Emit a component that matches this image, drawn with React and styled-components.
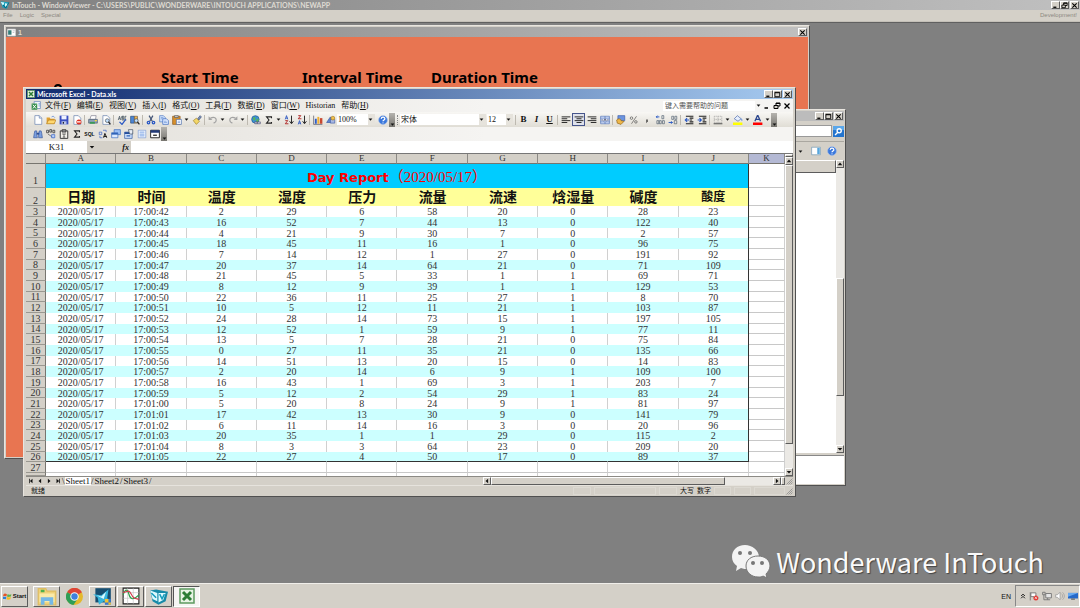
import styled, { createGlobalStyle, css } from 'styled-components'

const columns = ['A', 'B', 'C', 'D', 'E', 'F', 'G', 'H', 'I', 'J']
const titles = ['日期', '时间', '温度', '湿度', '压力', '流量', '流速', '焓湿量', '碱度', '酸度']
const readings = [
  ['17:00:42', 2, 29, 6, 58, 20, 0, 28, 23],
  ['17:00:43', 16, 52, 7, 44, 13, 0, 122, 40],
  ['17:00:44', 4, 21, 9, 30, 7, 0, 2, 57],
  ['17:00:45', 18, 45, 11, 16, 1, 0, 96, 75],
  ['17:00:46', 7, 14, 12, 1, 27, 0, 191, 92],
  ['17:00:47', 20, 37, 14, 64, 21, 0, 71, 109],
  ['17:00:48', 21, 45, 5, 33, 1, 1, 69, 71],
  ['17:00:49', 8, 12, 9, 39, 1, 1, 129, 53],
  ['17:00:50', 22, 36, 11, 25, 27, 1, 8, 70],
  ['17:00:51', 10, 5, 12, 11, 21, 1, 103, 87],
  ['17:00:52', 24, 28, 14, 73, 15, 1, 197, 105],
  ['17:00:53', 12, 52, 1, 59, 9, 1, 77, 11],
  ['17:00:54', 13, 5, 7, 28, 21, 0, 75, 84],
  ['17:00:55', 0, 27, 11, 35, 21, 0, 135, 66],
  ['17:00:56', 14, 51, 13, 20, 15, 0, 14, 83],
  ['17:00:57', 2, 20, 14, 6, 9, 1, 109, 100],
  ['17:00:58', 16, 43, 1, 69, 3, 1, 203, 7],
  ['17:00:59', 5, 12, 2, 54, 29, 1, 83, 24],
  ['17:01:00', 5, 20, 8, 24, 9, 1, 81, 97],
  ['17:01:01', 17, 42, 13, 30, 9, 0, 141, 79],
  ['17:01:02', 6, 11, 14, 16, 3, 0, 20, 96],
  ['17:01:03', 20, 35, 1, 1, 29, 0, 115, 2],
  ['17:01:04', 8, 3, 3, 64, 23, 0, 209, 20],
  ['17:01:05', 22, 27, 4, 50, 17, 0, 89, 37],
]
const menus = [
  ['文件', 'F'], ['编辑', 'E'], ['视图', 'V'], ['插入', 'I'], ['格式', 'O'],
  ['工具', 'T'], ['数据', 'D'], ['窗口', 'W'], ['Historian', ''], ['帮助', 'H'],
]

const page = <path d="M3 1h7l4 4v10H3z" fill="#fff" stroke="#5a76a8" />
const magnifier = (
  <>
    <circle cx="10" cy="9" r="3" fill="#bfe0ff" stroke="#444" />
    <path d="M12 11l3 4" stroke="#222" strokeWidth="2" />
  </>
)

const icons = {
  new: <>{page}<path d="M10 1v4h4" fill="#dde6f5" stroke="#5a76a8" /></>,
  open: <><path d="M1 4h5l1 2h7v8H1z" fill="#e0a030" /><path d="M4 8h12l-3 6H1z" fill="#ffd870" stroke="#b07818" /><path d="M9 3c3-2 4 0 5 1" stroke="#36c" fill="none" /></>,
  save: <><path d="M1 1h14v14H1z" fill="#3a4fc0" /><path d="M4 1h8v6H4z" fill="#eef2ff" /><path d="M4 10h8v5H4z" fill="#b9c4e8" /><path d="M6 11h2v3H6z" fill="#223" /></>,
  permission: <>{page}<circle cx="11" cy="11" r="4" fill="#e03020" /><path d="M8 11h6" stroke="#fff" strokeWidth="2" /></>,
  print: <><path d="M5 1h8l-1 6H3z" fill="#fff" stroke="#778" /><path d="M1 7h14v6H1z" fill="#8fa0b8" stroke="#456" /><path d="M3 11h8v3H3z" fill="#3a9a58" /><path d="M11 9h3" stroke="#fd3" strokeWidth="2" /></>,
  preview: <>{page}{magnifier}</>,
  spell: <><path d="M2 8l2-6 2 6M3 6h2M8 2v6h3V5H8V2h3v3M15 2h-2v6h2" stroke="#234" fill="none" /><path d="M4 11l4 4 6-8" stroke="#2857c4" strokeWidth="2" fill="none" /></>,
  research: <><path d="M1 2h6v11H1z" fill="#4d86d6" stroke="#246" /><path d="M7 2h5v11H7z" fill="#f1b64c" stroke="#654" />{magnifier}</>,
  cut: <><path d="M5 1l5 9M11 1L6 10" stroke="#457" strokeWidth="2" /><circle cx="4" cy="12" r="2" fill="none" stroke="#2857c4" strokeWidth="2" /><circle cx="12" cy="12" r="2" fill="none" stroke="#2857c4" strokeWidth="2" /></>,
  copy: <><path d="M1 1h6l3 3v7H1z" fill="#cfe0fb" stroke="#4a76c0" /><path d="M6 6h6l3 3v6H6z" fill="#dce9ff" stroke="#2c5cb8" /><path d="M8 10h4M8 12h5M3 4h4M3 6h3" stroke="#6a92d4" /></>,
  paste: <><path d="M1 2h12v13H1z" fill="#d8912c" stroke="#855012" /><path d="M4 1h6v3H4z" fill="#ccc" stroke="#555" /><path d="M7 7h8v8H7z" fill="#fff" stroke="#3a62a8" /><path d="M9 10h4M9 12h4" stroke="#6a92d4" /></>,
  painter: <><path d="M9 6l4-5 2 2-4 5z" fill="#7d94c0" stroke="#346" /><path d="M2 9l5-4 5 5-5 5z" fill="#f3d768" stroke="#957824" /></>,
  undo: <><path d="M4 5c6-3 10 0 9 4c0 2-2 3-4 4" fill="none" stroke="#a3a3a3" strokeWidth="2" /><path d="M1 2v6h6z" fill="#a3a3a3" /></>,
  redo: <><path d="M12 5c-6-3-10 0-9 4c0 2 2 3 4 4" fill="none" stroke="#a3a3a3" strokeWidth="2" /><path d="M15 2v6H9z" fill="#a3a3a3" /></>,
  link: <><circle cx="7" cy="7" r="6" fill="#3d8fd4" stroke="#1b568f" /><path d="M3 5c3-4 5 0 4 2s-3 3-4-2M8 8l4-3v5l-3 2z" fill="#56b55c" /><path d="M6 11h4v3H6zM10 11h5v3h-5z" fill="#ccd" stroke="#557" /></>,
  sum: <path d="M12 5V3H4l4 5-4 5h8v-2" fill="none" stroke="#222" strokeWidth="1.7" />,
  sortUp: <><path d="M2 7l2-6 2 6M3 5h3" stroke="#2450c0" fill="none" strokeWidth="1.3" /><path d="M2 9h4l-4 5h5" stroke="#b02828" fill="none" strokeWidth="1.5" /><path d="M12 1v12M9 10l3 4 3-4" stroke="#222" fill="none" strokeWidth="1.5" /></>,
  sortDown: <><path d="M2 1h4L2 6h5" stroke="#b02828" fill="none" strokeWidth="1.5" /><path d="M2 15l2-6 2 6M3 13h3" stroke="#2450c0" fill="none" strokeWidth="1.3" /><path d="M12 1v12M9 10l3 4 3-4" stroke="#222" fill="none" strokeWidth="1.5" /></>,
  chart: <><path d="M1 1v14h14" fill="none" stroke="#445" /><path d="M3 6h3v8H3z" fill="#2f5fc8" /><path d="M7 3h3v11H7z" fill="#f0b030" /><path d="M11 5h4v9h-4z" fill="#c84830" /></>,
  drawing: <><path d="M1 12l6-9 3 9z" fill="#6186d0" stroke="#2b4fa0" /><path d="M7 7h7v6H7z" fill="#a9b9e4" stroke="#3b58a4" /><circle cx="11" cy="5" r="3" fill="#eec050" stroke="#a47820" /></>,
  help: <><circle cx="8" cy="8" r="7" fill="#3b78dc" stroke="#9db9e8" /><path d="M5 6c1-4 6-3 6 0c0 2-3 2-3 4M8 12v1" stroke="#fff" fill="none" strokeWidth="2" /></>,
  left: <path d="M1 3h14M1 6h9M1 9h14M1 12h9" stroke="#222" strokeWidth="1.5" />,
  center: <path d="M1 3h14M4 6h8M1 9h14M4 12h8" stroke="#222" strokeWidth="1.5" />,
  right: <path d="M1 3h14M6 6h9M1 9h14M6 12h9" stroke="#222" strokeWidth="1.5" />,
  merge: <><path d="M1 2h14v12H1zM1 5h14M1 11h14M8 2v3M8 11v3" fill="#dfe9ff" stroke="#4467b0" /><path d="M2 8h3M11 8h3M6 10l2-4 2 4" stroke="#223" fill="none" /></>,
  currency: <><path d="M3 1h11v8H3z" fill="#6d94de" stroke="#3359a8" /><path d="M1 8c3-3 7-2 7 1l5 1-5 5-6-2z" fill="#efb84a" stroke="#8a5d14" /></>,
  percent: <><circle cx="4" cy="5" r="2" fill="none" stroke="#444" /><circle cx="11" cy="11" r="2" fill="none" stroke="#444" /><path d="M12 2L4 14" stroke="#444" /></>,
  comma: <path d="M7 7h2v3l-2 3v-3z" fill="#222" />,
  moreDecimal: <><path d="M2 3h5M4 1L2 3l2 2" stroke="#2857c4" fill="none" strokeWidth="1.5" /><path d="M11 1h3v5h-3zM3 9h3v5H3zM7 9h3v5H7zM12 9h3v5h-3z" fill="none" stroke="#456" /></>,
  lessDecimal: <><path d="M1 12h6M5 10l2 2-2 2" stroke="#2857c4" fill="none" strokeWidth="1.5" /><path d="M6 2h3v5H6zM11 2h3v5h-3zM10 9h4v5h-4z" fill="none" stroke="#456" /></>,
  outdent: <><path d="M3 2h12M9 5h6M9 8h4M9 11h6M3 14h12" stroke="#222" strokeWidth="1.7" /><path d="M8 8H2M5 5L2 8l3 3" stroke="#2857c4" fill="none" strokeWidth="1.7" /></>,
  indent: <><path d="M3 2h12M9 5h6M9 8h4M9 11h6M3 14h12" stroke="#222" strokeWidth="1.7" /><path d="M1 8h6M4 5l3 3-3 3" stroke="#2857c4" fill="none" strokeWidth="1.7" /></>,
  borders: <><path d="M2 2h12v10H2zM8 2v10M2 7h12" fill="none" stroke="#9a9a9a" strokeDasharray="2 1" /><path d="M1 14h14" stroke="#444" strokeWidth="1.5" /></>,
  fill: <><path d="M2 6l5-5 6 5-5 4z" fill="#e6eefc" stroke="#3c5da8" /><path d="M13 5c3 2 2 4 1 5z" fill="#3f79de" /><path d="M0 12h15v4H0z" fill="#ff0" /></>,
  fontColor: <><path d="M3 10L7 1h1l4 9M5 7h6" fill="none" stroke="#2c468e" strokeWidth="2" /><path d="M0 12h15v4H0z" fill="#f00" /></>,
  binoculars: <><path d="M3 3h3v5l1 6H1l1-7zM10 3h3l1 4 1 7H9V8z" fill="#7ca0e0" stroke="#2d4f98" /><path d="M6 6h4v3H6z" fill="#2d4f98" /></>,
  tags: <><path d="M1 2h3v4H1zM6 1h3v4H6zM11 2h3v4h-3z" fill="none" stroke="#333" strokeWidth="1.2" /><path d="M3 8l9 6" stroke="#444" /><path d="M9 9h5v5H9z" fill="#bcd2f6" stroke="#2857c4" /></>,
  clipboard: <><path d="M2 3h12v12H2z" fill="#f4f2ec" stroke="#333" strokeWidth="1.5" /><path d="M5 1h6v4H5z" fill="#888" stroke="#222" /><path d="M5 8h6M8 8v5M6 13h4" stroke="#222" /></>,
  font: <><path d="M9 14l2-7 3 7M9 12h5" stroke="#222" fill="none" strokeWidth="1.6" /><path d="M2 5h4v4H2zM8 2h5v3M3 11v3h4" stroke="#2857c4" fill="none" /></>,
  cascade: <><path d="M5 1h10v8H5z" fill="#9dc1f6" stroke="#2d62b8" /><path d="M1 6h10v8H1z" fill="#dceaff" stroke="#2d62b8" /><path d="M1 6h10v3H1z" fill="#2d62b8" /></>,
  wizard: <><path d="M1 5h12v10H1z" fill="#cfe0fb" stroke="#234d9c" /><path d="M1 5h12v3H1z" fill="#234d9c" /><path d="M7 1h7v7H9z" fill="#e8edf6" stroke="#345" /><path d="M4 11h6" stroke="#2d62b8" strokeWidth="2" /></>,
  grid: <><path d="M2 2h12v12H2z" fill="#fff" stroke="#6a8fd0" /><path d="M4 5h8M4 8h8M4 11h8" stroke="#8eb1ea" strokeWidth="2" /></>,
  form: <><path d="M1 2h14v12H1z" fill="#fff" stroke="#222" strokeWidth="1.5" /><path d="M1 2h14v4H1z" fill="#223a78" /><path d="M5 10h6" stroke="#222" strokeWidth="2" /></>,
  excel: <><path d="M1 1h14v14H1z" fill="#e7f3e3" stroke="#5d9a60" strokeWidth="1.5" /><path d="M4 4l8 8M12 4l-8 8" stroke="#2c7c34" strokeWidth="3" /></>,
  book: <><path d="M5 1h10v11H5z" fill="#fff" stroke="#4a70b0" /><path d="M1 4h9v10H1z" fill="#3b9150" /><path d="M3 6l5 6M8 6l-5 6" stroke="#fff" strokeWidth="1.5" /><path d="M12 4h2M12 6h2M12 8h2" stroke="#37c" /></>,
  viewer: <><path d="M1 2l14 2-4 10-7-2z" fill="#16a0bd" /><path d="M1 3l6 1-2 5zM8 5l5 1-2 5-3-1z" fill="#d6fbff" /><path d="M5 8l4 5 5-9" stroke="#075e76" fill="none" strokeWidth="1.5" /></>,
  screen: <><path d="M1 2h14v12H1z" fill="#fff" stroke="#ddd" /><path d="M2 4h6v8H2z" fill="#347d78" /><path d="M10 5h4M10 8h3" stroke="#99a" /></>,
  panes: <><path d="M1 2h14v12H1z" fill="#fff" stroke="#6590b0" /><path d="M10 3h4v10h-4z" fill="#57a6dc" /></>,
  search: <><path d="M0 0h16v16H0z" fill="#2374cf" /><path d="M0 0h16v6H0z" fill="#5aa7ea" /><circle cx="9" cy="7" r="3" fill="none" stroke="#fff" strokeWidth="2" /><path d="M7 9l-4 4" stroke="#fff" strokeWidth="2" /></>,
  minimize: <path d="M3 12h7" stroke="#000" strokeWidth="3" />,
  maximize: <path d="M2 3h11v10H2zM2 4h11" fill="none" stroke="#000" strokeWidth="2" />,
  restore: <><path d="M6 2h8v6H6zM6 3h8" fill="none" stroke="#000" strokeWidth="2" /><path d="M2 7h8v6H2z" fill="#d4d0c8" stroke="#000" strokeWidth="2" /></>,
  close: <path d="M3 3l10 10M13 3L3 13" stroke="#000" strokeWidth="2.5" />,
  caret: <path d="M2 5h12l-6 7z" fill="#111" />,
  up: <path d="M2 11h12L8 4z" fill="#111" />,
  more: <path d="M3 8l5-5 5 5M3 14l5-5 5 5" fill="none" stroke="#111" strokeWidth="2.5" />,
  next: <path d="M5 2v12l7-6z" fill="#111" />,
  prev: <path d="M11 2v12L4 8z" fill="#111" />,
  first: <path d="M12 2v12L5 8zM3 2h2v12H3z" fill="#111" />,
  last: <path d="M4 2v12l7-6zM11 2h2v12h-2z" fill="#111" />,
  resize: <path d="M15 3L3 15M15 7l-8 8M15 11l-4 4" stroke="#888" strokeWidth="1.5" />,
  folder: <><path d="M1 2h6l1 2h7v11H1z" fill="#efd27a" stroke="#e0bd62" /><path d="M3 3h3v2H3z" fill="#4db04d" /><path d="M2 6h12v7H2z" fill="#fbeaa8" /><path d="M3 15V9h10v6h-3v-3H6v3z" fill="#76b8e6" /></>,
  chrome: <><circle cx="8" cy="8" r="8" fill="#e4b92c" /><path d="M8 8L1 4a8 8 0 0 1 14 0z" fill="#dd4437" /><path d="M1 4a8 8 0 0 0 6 12l4-6-3-2z" fill="#2f9e57" /><circle cx="8" cy="8" r="4" fill="#f5f5f5" /><circle cx="8" cy="8" r="3" fill="#3f80dd" /></>,
  maker: <><path d="M2 1h13v12H2z" fill="#174e70" /><path d="M0 6l7 1 6-5-1 7 2 5-5-2-4 3-1-6z" fill="#37b5dc" /><path d="M3 7l4 1 4-4-2 6z" fill="#d9faff" /><path d="M10 10h5v5h-5z" fill="#3679d2" /><path d="M10 10h3v3h-3zM13 13h2v2h-2z" fill="#f3c22d" /></>,
  trend: <><path d="M1 1h14v14H1z" fill="#fff" stroke="#222" /><path d="M1 5h14M1 10h14M5 1v14M10 1v14" stroke="#bbb" strokeWidth=".5" /><path d="M1 7c2-6 4-5 5-1s3 7 9 1" fill="none" stroke="#2aa04a" /><path d="M1 5c4-1 5-3 7 1s3 4 7 5" fill="none" stroke="#d23a4a" /></>,
  viewerLarge: <><path d="M1 3l5-1 10 2-2 8-6 3-5-3z" fill="#178aa8" /><path d="M1 3l6 2v7l-4-2zM8 5l6 0-2 6-4 2z" fill="#dffaff" /><path d="M9 6l2 4 2-4M2 5l4 4" fill="none" stroke="#159cbd" strokeWidth="1.3" /></>,
  windows: <><path d="M1 4c2-2 4-1 6 0L6 8C4 7 3 7 0 8z" fill="#e65324" /><path d="M8 4c3 1 5 1 7 0l-1 4c-3 1-5 1-7 0z" fill="#62b146" /><path d="M0 9c2-1 4-1 6 0l-1 4c-2-1-4-1-6 0z" fill="#2e7fd4" /><path d="M7 9c3 1 5 1 7 0l-1 4c-3 1-5 1-7 0z" fill="#f6bd1e" /></>,
  flag: <><path d="M2 2v13M3 3h8v6H3z" fill="#fff" stroke="#777" strokeWidth="1.5" /><circle cx="11" cy="11" r="4" fill="#e23b35" /><path d="M9 9l4 4M13 9l-4 4" stroke="#fff" /></>,
  network: <><path d="M6 4h9v7H6z" fill="#e5e5e5" stroke="#777" strokeWidth="1.5" /><path d="M1 2h4v4H1zM3 6v8h10M9 11v3" fill="none" stroke="#777" strokeWidth="1.5" /></>,
  sound: <><path d="M1 6h3l4-4v12l-4-4H1z" fill="#fff" stroke="#888" /><path d="M10 4c3 2 3 6 0 8M12 2c4 4 4 8 0 12" fill="none" stroke="#999" /></>,
  monitor: <><path d="M0 3h16v9H0z" fill="#2669c9" /><path d="M0 3h16L0 9z" fill="#68a9ef" /><path d="M5 13h6" stroke="#666" strokeWidth="2" /></>,
}

function Icon({ name, size = 10 }) {
  return (
    <svg width={size} height={size} viewBox="0 0 16 16" aria-hidden="true">
      {icons[name]}
    </svg>
  )
}

function Tools({ names }) {
  return names.map((name, i) => {
    if (name === '|') return <Separator key={i} />
    if (name === 'v') {
      return (
        <DropButton key={i} aria-label="more">
          <Icon name="caret" size={5} />
        </DropButton>
      )
    }
    return (
      <ToolButton key={i} aria-label={name} $active={name === 'center'}>
        {name === 'bold' && <b>B</b>}
        {name === 'italic' && <i>I</i>}
        {name === 'underline' && <u>U</u>}
        {name === 'sql' && <small>SQL</small>}
        {icons[name] && <Icon name={name} />}
      </ToolButton>
    )
  })
}

function WindowButtons({ names }) {
  return (
    <ButtonGroup>
      {names.map((name) => (
        <WindowButton key={name} aria-label={name}>
          <Icon name={name} size={7} />
        </WindowButton>
      ))}
    </ButtonGroup>
  )
}

function Sheet() {
  return (
    <Grid>
      <colgroup>
        <col className="edge" />
        {columns.map((c) => <col key={c} />)}
        <col className="last" />
      </colgroup>
      <thead>
        <tr>
          <ColumnHead />
          {columns.map((c) => <ColumnHead key={c}>{c}</ColumnHead>)}
          <ColumnHead $selected>K</ColumnHead>
        </tr>
      </thead>
      <tbody>
        <TitleRow>
          <RowHead>1</RowHead>
          <ReportTitle colSpan={10}>
            <strong>Day Report</strong>（2020/05/17）
          </ReportTitle>
          <Cell $lined />
        </TitleRow>
        <NameRow>
          <RowHead>2</RowHead>
          {titles.map((t, i) => <NameCell key={t} $small={i === 9}>{t}</NameCell>)}
          <Cell $lined />
        </NameRow>
      </tbody>
      <DataBody>
        {readings.map((row, i) => (
          <tr key={row[0]}>
            <RowHead>{i + 3}</RowHead>
            {['2020/05/17', ...row].map((v, j) => <Cell key={j}>{v}</Cell>)}
            <Cell $lined />
          </tr>
        ))}
      </DataBody>
      <tbody>
        <SpareRow>
          <RowHead>27</RowHead>
          {columns.map((c) => <Cell key={c} $lined />)}
          <Cell $lined />
        </SpareRow>
        <PartRow>
          <RowHead />
          {columns.map((c) => <Cell key={c} />)}
          <Cell />
        </PartRow>
      </tbody>
    </Grid>
  )
}

function Excel() {
  return (
    <ExcelWindow>
      <ExcelTitle>
        <Icon name="excel" size={8} />
        <h1>Microsoft Excel - Data.xls</h1>
        <WindowButtons names={['minimize', 'maximize', 'close']} />
      </ExcelTitle>

      <MenuBar>
        <Icon name="book" />
        {menus.map(([label, key]) => (
          <MenuButton key={label}>
            {label}
            {key && <>(<u>{key}</u>)</>}
          </MenuButton>
        ))}
        <Question aria-label="键入需要帮助的问题" placeholder="键入需要帮助的问题" />
        <DropButton aria-label="more"><Icon name="caret" size={5} /></DropButton>
        <FlatButton aria-label="minimize"><Icon name="minimize" size={8} /></FlatButton>
        <FlatButton aria-label="restore"><Icon name="restore" size={8} /></FlatButton>
        <FlatButton aria-label="close"><Icon name="close" size={8} /></FlatButton>
      </MenuBar>

      <ToolBar>
        <Tools names={['new', 'open', 'save', 'permission', '|', 'print', 'preview', '|', 'spell', 'research', '|', 'cut', 'copy', 'paste', 'v', 'painter', '|', 'undo', 'v', 'redo', 'v', '|', 'link', 'sum', 'v', 'sortUp', 'sortDown', '|', 'chart', 'drawing']} />
        <Combo $width={38}>
          <select aria-label="zoom"><option>100%</option></select>
          <Icon name="caret" size={5} />
        </Combo>
        <Tools names={['help']} />
        <BarEnd><Icon name="caret" size={5} /></BarEnd>
        <Grip />
        <Combo $width={86}>
          <select aria-label="font"><option>宋体</option></select>
          <Icon name="caret" size={5} />
        </Combo>
        <Combo $width={26}>
          <select aria-label="font size"><option>12</option></select>
          <Icon name="caret" size={5} />
        </Combo>
        <Tools names={['|', 'bold', 'italic', 'underline', '|', 'left', 'center', 'right', 'merge', '|', 'currency', 'percent', 'comma', 'moreDecimal', 'lessDecimal', '|', 'outdent', 'indent', '|', 'borders', 'v', 'fill', 'v', 'fontColor', 'v']} />
        <BarEnd><Icon name="caret" size={5} /></BarEnd>
      </ToolBar>
      <ToolBar $plain>
        <Tools names={['binoculars', 'tags', 'clipboard', 'sum', 'sql', 'font', 'cascade', 'wizard', 'grid', 'form']} />
        <BarEnd><Icon name="caret" size={5} /></BarEnd>
      </ToolBar>

      <FormulaBar>
        <NameBox aria-label="cell" defaultValue="K31" />
        <NameDrop aria-label="cells"><Icon name="caret" size={6} /></NameDrop>
        <FormulaButton>fx</FormulaButton>
        <FormulaInput aria-label="formula" />
      </FormulaBar>

      <Book>
        <Sheet />
        <ScrollColumn>
          <Splitter />
          <ScrollButton aria-label="up"><Icon name="up" size={6} /></ScrollButton>
          <Thumb $grow={92} />
          <Track $grow={8} />
          <ScrollButton aria-label="down"><Icon name="caret" size={6} /></ScrollButton>
        </ScrollColumn>
      </Book>

      <TabBar>
        <SheetTabs>
          <TabArrow aria-label="first"><Icon name="first" size={6} /></TabArrow>
          <TabArrow aria-label="previous"><Icon name="prev" size={6} /></TabArrow>
          <TabArrow aria-label="next"><Icon name="next" size={6} /></TabArrow>
          <TabArrow aria-label="last"><Icon name="last" size={6} /></TabArrow>
          <span>\</span>
          <SheetTab $active>Sheet1</SheetTab>
          <span>/</span>
          <SheetTab>Sheet2</SheetTab>
          <span>/</span>
          <SheetTab>Sheet3</SheetTab>
          <span>/</span>
        </SheetTabs>
        <ScrollRow>
          <ScrollButton aria-label="left"><Icon name="prev" size={6} /></ScrollButton>
          <Thumb $grow={83} />
          <Track $grow={17} />
          <ScrollButton aria-label="right"><Icon name="next" size={6} /></ScrollButton>
          <Splitter $upright />
        </ScrollRow>
        <Icon name="resize" size={8} />
      </TabBar>

      <StatusBar>
        <span>就绪</span>
        <StatusFields>
          <StatusField $width={18} />
          <StatusField $width={62} />
          <StatusField $width={18} />
          <span>大写</span>
          <span>数字</span>
          <StatusField $width={17} />
          <StatusField $width={17} />
          <StatusField $width={31} />
        </StatusFields>
        <Icon name="resize" size={8} />
      </StatusBar>
    </ExcelWindow>
  )
}

export default function App() {
  return (
    <Screen>
      <GlobalStyle />
      <MainTitle>
        <Icon name="viewer" />
        <span>InTouch - WindowViewer - C:\USERS\PUBLIC\WONDERWARE\INTOUCH APPLICATIONS\NEWAPP</span>
        <WindowButtons names={['minimize', 'restore', 'close']} />
      </MainTitle>
      <MainMenu>
        <button>File</button>
        <button>Logic</button>
        <button>Special</button>
        <button>Development!</button>
      </MainMenu>

      <Desktop>
        <ReportWindow>
          <GreyTitle>
            <Icon name="screen" size={9} />
            <span>1</span>
            <WindowButtons names={['close']} />
          </GreyTitle>
          <Form>
            <Knob />
            <Label>Start Time</Label>
            <Label>Interval Time</Label>
            <Label>Duration Time</Label>
          </Form>
        </ReportWindow>

        <ExplorerWindow>
          <GreyTitle $light>
            <WindowButtons names={['minimize', 'maximize', 'close']} />
          </GreyTitle>
          <AddressBar>
            <input aria-label="search" />
            <button aria-label="go"><Icon name="search" size={11} /></button>
          </AddressBar>
          <ExplorerTools>
            <FlatButton aria-label="view"><Icon name="caret" size={5} /></FlatButton>
            <FlatButton aria-label="panes"><Icon name="panes" /></FlatButton>
            <FlatButton aria-label="help"><Icon name="help" /></FlatButton>
          </ExplorerTools>
          <FileArea>
            <FileList><FileHead /></FileList>
            <ScrollColumn>
              <ScrollButton aria-label="up"><Icon name="up" size={6} /></ScrollButton>
              <Track $grow={40} />
              <Thumb $grow={42} />
              <Track $grow={18} />
              <ScrollButton aria-label="down"><Icon name="caret" size={6} /></ScrollButton>
            </ScrollColumn>
          </FileArea>
          <Details />
        </ExplorerWindow>

        <Excel />

        <Watermark>
          <svg width="40" height="36" viewBox="0 0 40 36" aria-hidden="true">
            <path d="M14 1C6 1 1 6 1 13c0 4 2 7 5 9l-1 5 5-3c2 1 5 1 7 1 6-1 11-5 11-12S21 1 14 1z" fill="#f3f3f3" />
            <circle cx="9" cy="9" r="2" fill="#777" />
            <circle cx="19" cy="9" r="2" fill="#777" />
            <path d="M27 12c-7 0-12 4-12 10s5 11 12 11c2 0 4 0 5-1l4 2-1-4c2-2 4-5 4-8 0-6-5-10-12-10z" fill="#f3f3f3" stroke="#777" />
            <circle cx="22" cy="19" r="2" fill="#777" />
            <circle cx="31" cy="19" r="2" fill="#777" />
          </svg>
          Wonderware InTouch
        </Watermark>
      </Desktop>

      <TaskBar>
        <StartButton><Icon name="windows" size={9} />Start</StartButton>
        <TaskButton aria-label="files"><Icon name="folder" size={20} /></TaskButton>
        <TaskButton aria-label="browser" $flat><Icon name="chrome" size={17} /></TaskButton>
        <TaskButton aria-label="WindowMaker"><Icon name="maker" size={19} /></TaskButton>
        <TaskButton aria-label="trend"><Icon name="trend" size={18} /></TaskButton>
        <TaskButton aria-label="WindowViewer"><Icon name="viewerLarge" size={19} /></TaskButton>
        <TaskButton aria-label="Excel" $pressed><Icon name="excel" size={16} /></TaskButton>
        <Language>EN</Language>
        <Tray>
          <Icon name="more" size={6} />
          <Icon name="flag" />
          <Icon name="network" />
          <Icon name="sound" />
          <Icon name="monitor" />
        </Tray>
      </TaskBar>
    </Screen>
  )
}

const GlobalStyle = createGlobalStyle`
  * {
    box-sizing: border-box;
  }
  body {
    margin: 0;
    background: #808080;
    font-family: 'Liberation Sans', 'Noto Sans CJK SC', sans-serif;
    font-size: 7px;
    line-height: 9px;
    color: #111;
  }
  button, input, select {
    margin: 0;
    padding: 0;
    border: 0;
    border-radius: 0;
    background: none;
    color: inherit;
    font: inherit;
  }
  svg {
    display: block;
    flex-shrink: 0;
  }
`

const raised = css`
  border: 1px solid;
  border-color: #fff #5c5c5c #5c5c5c #fff;
  background: #d4d0c8;
`

const Screen = styled.div`
  min-height: 100vh;
  display: flex;
  flex-direction: column;
`

const MainTitle = styled.header`
  display: flex;
  align-items: center;
  gap: 2px;
  height: 10px;
  padding-right: 1px;
  background: linear-gradient(90deg, #808080, #c0c0c0);
  color: #dedad2;
  font-family: Lato, sans-serif;
  font-weight: 700;
`

const ButtonGroup = styled.div`
  display: flex;
  margin-left: auto;
  button:last-child:not(:first-child) {
    margin-left: 1px;
  }
`

const WindowButton = styled.button`
  ${raised}
  display: flex;
  align-items: center;
  justify-content: center;
  width: 9px;
  height: 8px;
`

const MainMenu = styled.nav`
  display: flex;
  gap: 7px;
  height: 12px;
  padding: 0 3px;
  background: #d4d0c8;
  border-bottom: 1px solid #c4c0b8;
  color: #8c8982;
  font-size: 6px;
  button:last-child {
    margin-left: auto;
  }
`

const Desktop = styled.main`
  position: relative;
  flex: 1;
  overflow: hidden;
  border-top: 1px solid #606060;
`

const Frame = styled.section`
  position: absolute;
  display: flex;
  flex-direction: column;
  padding: 1px;
  background: #d4d0c8;
  border: 1px solid;
  border-color: #e8e5df #505050 #505050 #e8e5df;
`

const ReportWindow = styled(Frame)`
  left: 4px;
  top: 2px;
  width: 806px;
  height: 434px;
`

const GreyTitle = styled.div`
  display: flex;
  align-items: center;
  gap: 2px;
  height: 10px;
  padding: 0 1px;
  background: ${({ $light }) => ($light ? '#bcbcbc' : 'linear-gradient(90deg, #808080, #c0c0c0)')};
  color: #dedad2;
  font-weight: 700;
`

const Form = styled.div`
  flex: 1;
  display: grid;
  grid-template-columns: 107px 141px 129px 1fr;
  align-content: start;
  padding: 31px 0 0 48px;
  background: #e87551;
`

const Label = styled.span`
  font-family: 'Noto Sans', sans-serif;
  font-size: 15px;
  line-height: 18px;
  font-weight: 700;
  color: #000;
`

const Knob = styled.span`
  width: 8px;
  height: 8px;
  margin-top: 16px;
  border: 2px solid #000;
  border-radius: 50%;
`

const ExplorerWindow = styled(Frame)`
  left: 600px;
  top: 86px;
  width: 246px;
  height: 377px;
`

const AddressBar = styled.div`
  display: flex;
  align-items: center;
  gap: 1px;
  height: 20px;
  input {
    flex: 1;
    height: 12px;
    background: #fff;
    border: 1px solid #999;
  }
`

const ExplorerTools = styled.div`
  display: flex;
  align-items: center;
  justify-content: flex-end;
  gap: 6px;
  height: 19px;
  padding-right: 7px;
  border-top: 1px solid #aaa7a0;
`

const FileArea = styled.div`
  flex: 1;
  display: flex;
`

const FileList = styled.div`
  flex: 1;
  background: #fff;
`

const FileHead = styled.div`
  ${raised}
  height: 13px;
`

const Details = styled.div`
  height: 29px;
  margin-top: 2px;
  background: #fff;
  border-top: 1px solid #888;
`

const ExcelWindow = styled(Frame)`
  left: 23px;
  top: 64px;
  width: 773px;
  min-height: 410px;
  padding: 1px 2px;
`

const ExcelTitle = styled.div`
  display: flex;
  align-items: center;
  gap: 2px;
  height: 10px;
  padding: 0 1px;
  background: linear-gradient(90deg, #0f2a6e, #a6caf0);
  h1 {
    margin: 0;
    color: #fff;
    font-family: Lato, sans-serif;
    font-size: 7px;
    line-height: 9px;
  }
`

const MenuBar = styled.nav`
  display: flex;
  align-items: center;
  height: 13px;
  padding: 0 1px 0 5px;
  background: linear-gradient(90deg, #e2dfd9, #f5f4f2 60%);
`

const MenuButton = styled.button`
  margin-left: 6px;
  font-family: 'Liberation Serif', 'Noto Sans CJK SC', serif;
  font-size: 8px;
  white-space: nowrap;
  svg + & {
    margin-left: 4px;
  }
`

const Question = styled.input`
  width: 92px;
  height: 10px;
  margin-left: auto;
  padding-left: 2px;
  background: #fff;
  &::placeholder {
    color: #555;
    opacity: 1;
  }
`

const FlatButton = styled.button`
  display: flex;
  align-items: center;
  justify-content: center;
  min-width: 10px;
`

const ToolBar = styled.div`
  display: flex;
  align-items: center;
  height: ${({ $plain }) => ($plain ? '14px' : '15px')};
  padding-left: 5px;
  background: ${({ $plain }) => ($plain
    ? 'linear-gradient(90deg, #e2dfd9, #f5f4f2 60%)'
    : 'linear-gradient(#f8f7f4, #e0ddd5)')};
`

const ToolButton = styled.button`
  display: flex;
  align-items: center;
  justify-content: center;
  width: 13px;
  height: 13px;
  flex-shrink: 0;
  font-family: 'Liberation Serif', serif;
  font-size: 9px;
  font-weight: 700;
  small {
    font-family: 'Liberation Sans', sans-serif;
    font-size: 5px;
  }
  ${({ $active }) => $active && css`
    background: #dfe2ec;
    border: 1px solid #46558c;
  `}
`

const DropButton = styled.button`
  display: flex;
  align-items: center;
  justify-content: center;
  width: 7px;
  height: 12px;
  flex-shrink: 0;
`

const Separator = styled.span`
  width: 1px;
  height: 10px;
  margin: 0 1px;
  background: #bdb9b0;
  flex-shrink: 0;
`

const Combo = styled.label`
  display: flex;
  align-items: center;
  width: ${({ $width }) => $width}px;
  height: 11px;
  padding-right: 2px;
  margin-right: 1px;
  background: linear-gradient(90deg, #fff calc(100% - 7px), #e6e3dc calc(100% - 7px));
  flex-shrink: 0;
  select {
    appearance: none;
    flex: 1;
    min-width: 0;
    padding-left: 1px;
    font-family: 'Liberation Serif', 'Noto Sans CJK SC', serif;
    font-size: 8px;
  }
`

const BarEnd = styled.span`
  display: flex;
  align-items: flex-end;
  justify-content: center;
  width: 6px;
  height: 14px;
  background: linear-gradient(#b5b3ae, #77756f);
  flex-shrink: 0;
`

const Grip = styled.span`
  width: 1px;
  height: 10px;
  margin: 0 2px;
  border-left: 1px dotted #888;
`

const FormulaBar = styled.div`
  display: flex;
  align-items: stretch;
  height: 12px;
  background: #d4d0c8;
  input {
    background: #fff;
    font-family: 'Liberation Serif', serif;
    font-size: 9px;
  }
`

const NameBox = styled.input`
  width: 61px;
  text-align: center;
`

const NameDrop = styled.button`
  display: flex;
  align-items: center;
  justify-content: center;
  width: 9px;
`

const FormulaButton = styled.button`
  width: 35px;
  padding-right: 2px;
  text-align: right;
  font: italic bold 8px 'Liberation Serif', serif;
`

const FormulaInput = styled.input`
  flex: 1;
`

const Book = styled.div`
  display: flex;
  border-top: 1px solid #777;
`

const Grid = styled.table`
  flex: 1;
  table-layout: fixed;
  width: 100%;
  border-collapse: separate;
  border-spacing: 0;
  background: #fff;
  font-family: 'Liberation Serif', 'Noto Sans CJK SC', serif;
  font-size: 10px;
  line-height: 9px;
  text-align: center;
  th, td {
    padding: 0;
  }
  .edge {
    width: 20px;
  }
  .last {
    width: 36px;
  }
`

const ColumnHead = styled.th`
  height: 10px;
  background: ${({ $selected }) => ($selected ? '#b4b9d4' : '#d4d0c8')};
  border-right: 1px solid #8c8a85;
  border-bottom: 1px solid #77756f;
  color: #333;
  font-size: 9px;
  font-weight: 400;
`

const RowHead = styled.th`
  background: #d4d0c8;
  border-right: 1px solid #77756f;
  border-bottom: 1px solid #9a9891;
  color: #333;
  font-weight: 400;
  vertical-align: bottom;
`

const Cell = styled.td`
  border-right: 1px solid #d0d0d0;
  border-bottom: ${({ $lined }) => ($lined ? '1px solid #c8c8c8' : '0')};
  color: #333;
`

const TitleRow = styled.tr`
  height: 24px;
  && th {
    padding-bottom: 2px;
  }
`

const ReportTitle = styled.td`
  background: #0cf;
  border-right: 1px solid #333;
  color: #f00;
  font-size: 15px;
  line-height: 19px;
  && {
    padding-top: 3px;
  }
  strong {
    font-family: 'DejaVu Sans', sans-serif;
    font-size: 13px;
  }
`

const NameRow = styled.tr`
  height: 18px;
`

const NameCell = styled.td`
  background: #ff9;
  color: #111;
  font-size: ${({ $small }) => ($small ? '12px' : '14px')};
  font-weight: 700;
  line-height: 17px;
  &:nth-last-child(2) {
    border-right: 1px solid #333;
  }
`

const DataBody = styled.tbody`
  tr {
    height: 11px;
  }
  tr:nth-child(3n) {
    height: 10px;
  }
  tr:nth-child(even) td:not(:last-child) {
    background: #cff;
    border-right-color: #cff;
  }
  tr td:nth-last-child(2) {
    border-right: 1px solid #333 !important;
  }
  tr:last-child td:not(:last-child) {
    border-bottom: 1px solid #333;
  }
`

const SpareRow = styled.tr`
  height: 11px;
`

const PartRow = styled.tr`
  height: 3px;
  line-height: 0;
`

const ScrollColumn = styled.div`
  display: flex;
  flex-direction: column;
  width: 8px;
`

const Splitter = styled.span`
  ${raised}
  width: ${({ $upright }) => ($upright ? '4px' : 'auto')};
  height: ${({ $upright }) => ($upright ? 'auto' : '3px')};
`

const ScrollButton = styled.button`
  ${raised}
  display: flex;
  align-items: center;
  justify-content: center;
  width: 8px;
  height: 8px;
  flex-shrink: 0;
`

const Thumb = styled.div`
  ${raised}
  flex: ${({ $grow }) => $grow} 0 0;
`

const Track = styled.div`
  flex: ${({ $grow }) => $grow} 0 0;
  background: #ebe9e5;
`

const TabBar = styled.div`
  display: flex;
  align-items: stretch;
  height: 9px;
  border-top: 1px solid #8c8a85;
`

const SheetTabs = styled.div`
  flex: 1;
  display: flex;
  align-items: center;
  font-family: 'Liberation Serif', serif;
  font-size: 9px;
`

const TabArrow = styled.button`
  display: flex;
  align-items: center;
  justify-content: center;
  width: 9px;
`

const SheetTab = styled.button`
  height: 8px;
  padding: 0 1px;
  line-height: 8px;
  background: ${({ $active }) => ($active ? '#fff' : 'none')};
  text-decoration: ${({ $active }) => ($active ? 'underline' : 'none')};
`

const ScrollRow = styled.div`
  display: flex;
  width: 302px;
`

const StatusBar = styled.footer`
  flex: 1;
  display: flex;
  align-items: center;
  justify-content: space-between;
  padding-left: 5px;
  border-top: 1px solid #e6e3dd;
  svg {
    align-self: flex-end;
  }
`

const StatusFields = styled.div`
  display: flex;
  align-items: center;
  gap: 3px;
  margin-left: auto;
`

const StatusField = styled.span`
  width: ${({ $width }) => $width}px;
  height: 8px;
  border: 1px solid #dcd9d2;
`

const Watermark = styled.div`
  position: absolute;
  right: 36px;
  bottom: 3px;
  display: flex;
  align-items: center;
  gap: 5px;
  color: #fafafa;
  font-family: 'Noto Sans CJK SC', sans-serif;
  font-size: 27px;
  line-height: 36px;
  text-shadow: 1px 1px 1px #444;
  white-space: nowrap;
`

const TaskBar = styled.footer`
  display: flex;
  align-items: center;
  gap: 1px;
  height: 25px;
  padding-left: 1px;
  background: #d4d0c8;
  border-top: 1px solid #f0eeea;
`

const StartButton = styled.button`
  ${raised}
  display: flex;
  align-items: center;
  justify-content: center;
  gap: 1px;
  width: 27px;
  height: 21px;
  margin-right: 4px;
  font-size: 6px;
  font-weight: 700;
`

const TaskButton = styled.button`
  ${raised}
  display: flex;
  align-items: center;
  justify-content: center;
  width: 27px;
  height: 21px;
  ${({ $flat }) => $flat && css`
    border-color: transparent;
  `}
  ${({ $pressed }) => $pressed && css`
    background: #f6f5f3;
    border-color: #555 #fff #fff #555;
  `}
`

const Language = styled.span`
  margin-left: auto;
  padding-right: 3px;
`

const Tray = styled.div`
  display: flex;
  align-items: center;
  gap: 3px;
  height: 22px;
  padding: 0 1px 0 4px;
  border: 1px solid;
  border-color: #888 #fff #fff #888;
`
